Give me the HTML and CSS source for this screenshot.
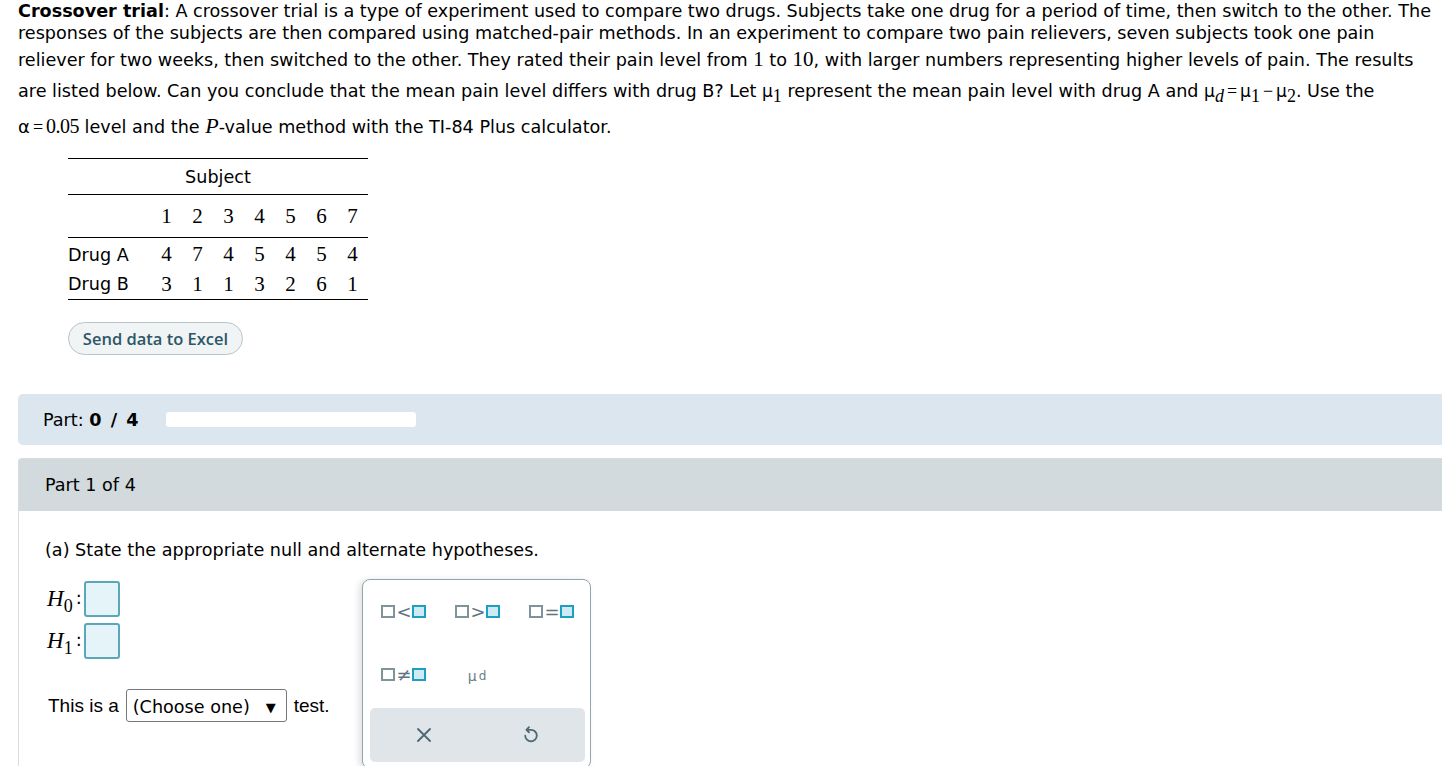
FILE: index.html
```html
<!DOCTYPE html>
<html lang="en">
<head>
    <meta charset="UTF-8">
    <title>Crossover trial</title>
    <link rel="stylesheet" href="styles.css">
</head>
<body>
    <div class="page">
        <div class="prompt">
            <div class="ln"><b>Crossover trial</b>: A crossover trial is a type of experiment used to compare two drugs. Subjects take one drug for a period of time, then switch to the other. The</div>
            <div class="ln">responses of the subjects are then compared using matched-pair methods. In an experiment to compare two pain relievers, seven subjects took one pain</div>
            <div class="ln ln-3">reliever for two weeks, then switched to the other. They rated their pain level from <span class="mn">1</span> to <span class="mn">10</span>, with larger numbers representing higher levels of pain. The results</div>
            <div class="ln ln-4">are listed below. Can you conclude that the mean pain level differs with drug B? Let <span class="mu">μ<sub class="mn-sub">1</sub></span> represent the mean pain level with drug A and <span class="mu">μ<sub class="mi-sub">d</sub></span><span class="eq">=</span><span class="mu">μ<sub class="mn-sub">1</sub></span><span class="eq">−</span><span class="mu">μ<sub class="mn-sub">2</sub></span>. Use the</div>
            <div class="ln ln-5"><span class="alpha">α</span><span class="eq">=</span><span class="mn num">0.05</span> level and the <i class="mi">P</i>-value method with the TI-84 Plus calculator.</div>
        </div>

        <table class="data">
            <tr class="head">
                <th colspan="8">Subject</th>
            </tr>
            <tr class="nums">
                <td class="label"></td>
                <td>1</td><td>2</td><td>3</td><td>4</td><td>5</td><td>6</td><td>7</td>
            </tr>
            <tr class="row-a">
                <td class="label">Drug A</td>
                <td>4</td><td>7</td><td>4</td><td>5</td><td>4</td><td>5</td><td>4</td>
            </tr>
            <tr class="row-b">
                <td class="label">Drug B</td>
                <td>3</td><td>1</td><td>1</td><td>3</td><td>2</td><td>6</td><td>1</td>
            </tr>
        </table>

        <button class="excel-btn">Send data to Excel</button>

        <div class="progress">
            <span>Part: <b>0 / 4</b></span>
            <div class="progress-track"></div>
        </div>

        <div class="part">
            <div class="part-head">Part 1 of 4</div>
            <div class="part-body">
                <div class="question">(a) State the appropriate null and alternate hypotheses.</div>
                <div class="work">
                    <div class="answers">
                        <div class="hyp">
                            <span class="h-label"><i>H</i><sub>0</sub></span><span class="colon">:</span>
                            <span class="slot"></span>
                        </div>
                        <div class="hyp">
                            <span class="h-label"><i>H</i><sub>1</sub></span><span class="colon">:</span>
                            <span class="slot"></span>
                        </div>
                        <div class="test-line">
                            This is a
                            <span class="select">(Choose one) <span class="caret">▼</span></span>
                            test.
                        </div>
                    </div>

                    <div class="palette">
                        <div class="keys">
                            <div class="key"><span class="box"></span><span class="op">&lt;</span><span class="box blue"></span></div>
                            <div class="key"><span class="box"></span><span class="op">&gt;</span><span class="box blue"></span></div>
                            <div class="key"><span class="box"></span><span class="op">=</span><span class="box blue"></span></div>
                            <div class="key"><span class="box"></span><span class="op">≠</span><span class="box blue"></span></div>
                            <div class="key mu-key">μ<sub>d</sub></div>
                        </div>
                        <div class="tools">
                            <svg class="tool" width="18" height="18" viewBox="0 0 18 18">
                                <path d="M3 3 L15 15 M15 3 L3 15" stroke="#4b6874" stroke-width="1.8" fill="none" stroke-linecap="round"/>
                            </svg>
                            <svg class="tool" width="18" height="20" viewBox="0 0 18 20">
                                <path d="M7 2.2 L4.4 4.8 L7 7.4 M4.6 4.8 H9 A5.8 5.8 0 1 1 3.2 10.6" stroke="#4b6874" stroke-width="1.8" fill="none" stroke-linecap="round" stroke-linejoin="round"/>
                            </svg>
                        </div>
                    </div>
                </div>
            </div>
        </div>
    </div>
</body>
</html>
```

FILE: styles.css
```css
* {
    box-sizing: border-box;
}

body {
    margin: 0;
    background: #fff;
    color: #000;
    font-family: "DejaVu Sans", Verdana, sans-serif;
    font-size: 17.6px;
}

.page {
    padding: 0 0 0 18px;
}

/* problem statement */

.prompt {
    line-height: 22px;
    white-space: nowrap;
}

.ln-3 {
    margin-top: 4px;
}

.ln-4 {
    margin-top: 9px;
}

.ln-5 {
    margin-top: 13px;
}

.mn,
.mi,
.eq,
.mn-sub,
.mi-sub {
    font-family: "Liberation Serif", "Times New Roman", serif;
}

.mn {
    font-size: 21px;
}

.num {
    font-size: 20px;
    letter-spacing: -0.5px;
}

.mi {
    font-size: 22px;
}

.mu {
    font-size: 17px;
}

.mn-sub,
.mi-sub {
    font-size: 18px;
    line-height: 0;
    vertical-align: -5px;
}

.mi-sub {
    font-style: italic;
}

.eq {
    font-size: 18px;
    margin: 0 3px;
}

.alpha {
    font-size: 18px;
}

/* data table */

.data {
    border-collapse: collapse;
    margin: 20px 0 0 50px;
    width: 300px;
}

.data th {
    font-weight: normal;
    height: 36px;
    border-top: 1px solid #000;
    border-bottom: 1px solid #000;
    padding: 0;
}

.data td {
    padding: 0;
    width: 31px;
    text-align: center;
    font-family: "Liberation Serif", "Times New Roman", serif;
    font-size: 21px;
}

.data td.label {
    width: 83px;
    text-align: left;
    font-family: "DejaVu Sans", Verdana, sans-serif;
    font-size: 17.6px;
}

.nums td {
    height: 43px;
    border-bottom: 1px solid #000;
}

.row-a td {
    height: 32px;
    padding-top: 2px;
}

.row-b td {
    height: 30px;
    border-bottom: 1px solid #000;
}

.excel-btn {
    display: block;
    margin: 22px 0 0 50px;
    width: 175px;
    height: 33px;
    border: 1px solid #b6c4c9;
    border-radius: 17px;
    background: #f0f4f5;
    color: #2d5667;
    font-family: "Open Sans", sans-serif;
    font-size: 16.5px;
    font-weight: 600;
    padding: 0;
}

/* progress bar */

.progress {
    margin-top: 39px;
    height: 51px;
    background: #dbe6ef;
    border-radius: 5px 0 0 5px;
    display: flex;
    align-items: center;
    padding-left: 25px;
    gap: 28px;
}

.progress b {
    word-spacing: 3px;
}

.progress-track {
    width: 250px;
    height: 15px;
    background: #fff;
    border-radius: 3px;
}

/* part panel */

.part {
    margin-top: 13px;
    border-top: 1px solid #d6dde0;
    border-left: 1px solid #d6dde0;
    border-radius: 4px 0 0 0;
}

.part-head {
    height: 52px;
    background: #d2dadd;
    display: flex;
    align-items: center;
    padding-left: 26px;
}

.part-body {
    padding: 28px 0 0 26px;
}

.question {
    line-height: 22px;
}

.work {
    display: flex;
    align-items: flex-start;
    margin-top: 20px;
}

.answers {
    width: 317px;
}

.hyp {
    display: flex;
    align-items: center;
    height: 36px;
    margin-bottom: 6px;
    padding-left: 2px;
}

.h-label {
    font-family: "Liberation Serif", "Times New Roman", serif;
    font-size: 23px;
}

.h-label sub {
    font-size: 18px;
    line-height: 0;
    vertical-align: -6px;
}

.colon {
    font-size: 18px;
    margin: 0 2px 0 3px;
    position: relative;
    top: -2px;
}

.slot {
    width: 36px;
    height: 36px;
    border: 2px solid #5aa8b7;
    border-radius: 3px;
    background: #e4f4f8;
}

.test-line {
    display: flex;
    align-items: center;
    gap: 7px;
    margin-top: 30px;
    padding-left: 3px;
    font-family: "Liberation Sans", Arial, sans-serif;
    font-size: 19px;
}

.select {
    display: inline-flex;
    align-items: center;
    justify-content: space-between;
    width: 161px;
    height: 33px;
    padding: 3px 10px 0 6px;
    border: 1px solid #777;
    border-radius: 3px;
    font-family: "DejaVu Sans", Verdana, sans-serif;
    font-size: 17.6px;
}

.caret {
    font-size: 13px;
}

/* symbol palette */

.palette {
    width: 229px;
    margin-top: -2px;
    border: 1px solid #93a6ae;
    border-radius: 8px;
    padding-bottom: 6px;
    background: #fff;
    box-shadow: -3px 1px 6px rgba(0, 0, 0, 0.12);
}

.keys {
    display: grid;
    grid-template-columns: repeat(3, 74px);
    grid-auto-rows: 63px;
    padding: 0 3px 0 3px;
}

.key {
    display: flex;
    align-items: center;
    justify-content: center;
    gap: 2px;
    color: #5d7580;
    font-size: 16px;
}

.box {
    width: 14px;
    height: 13px;
    border: 2px solid #7f939b;
    background: #fff;
}

.box.blue {
    border-color: #1e9fc0;
    background: #cdebf2;
}

.op {
    font-size: 18px;
    line-height: 1;
    width: 13px;
    text-align: center;
}

.mu-key {
    font-size: 14px;
    color: #6b8089;
    padding-top: 2px;
}

.mu-key sub {
    font-size: 12px;
    vertical-align: -2px;
}

.tools {
    margin: 2px 5px 0 7px;
    height: 54px;
    background: #dfe5e8;
    border-radius: 5px;
    display: flex;
    align-items: center;
    justify-content: space-around;
}
```
